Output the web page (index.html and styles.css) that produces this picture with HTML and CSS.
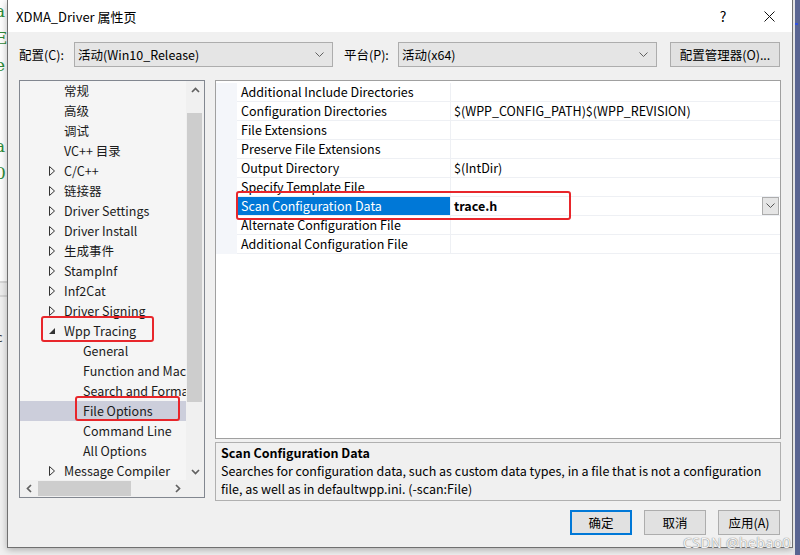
FILE: index.html
```html
<!DOCTYPE html>
<html>
<head>
<meta charset="utf-8">
<title>XDMA_Driver 属性页</title>
<link rel="stylesheet" href="styles.css">
</head>
<body>
<div class="screen">
  <div class="editor-strip">
    <div class="code-area">
      <div class="code-line">a</div>
      <div class="code-line">E</div>
      <div class="code-line">e</div>
      <div class="code-line"></div>
      <div class="code-line"></div>
      <div class="code-line">a</div>
      <div class="code-line">0</div>
    </div>
    <div class="strip-band"></div>
    <div class="strip-rest"><span class="strip-char">c</span></div>
  </div>

  <div class="dialog">
    <div class="titlebar">
      <span class="title">XDMA_Driver 属性页</span>
      <span class="tb-btn tb-help">?</span>
      <span class="tb-btn tb-close">
        <svg width="11" height="11" viewBox="0 0 11 11"><path d="M0.5 0.5 L10.5 10.5 M10.5 0.5 L0.5 10.5" stroke="#111" stroke-width="1" fill="none"/></svg>
      </span>
    </div>

    <div class="dlg-body">
      <div class="config-row">
        <span class="lbl lbl-config">配置(C):</span>
        <div class="combo">
          <span class="combo-text">活动(Win10_Release)</span>
          <svg class="chev" width="9" height="5" viewBox="0 0 9 5"><path d="M0.5 0.5 L4.5 4.5 L8.5 0.5" fill="none" stroke="#606060"/></svg>
        </div>
        <span class="lbl lbl-platform">平台(P):</span>
        <div class="combo">
          <span class="combo-text">活动(x64)</span>
          <svg class="chev" width="9" height="5" viewBox="0 0 9 5"><path d="M0.5 0.5 L4.5 4.5 L8.5 0.5" fill="none" stroke="#606060"/></svg>
        </div>
        <button class="btn btn-mgr">配置管理器(O)...</button>
      </div>

      <div class="main">
        <div class="tree">
          <div class="tree-list">
            <div class="tree-row"><span class="exp"></span>常规</div>
            <div class="tree-row"><span class="exp"></span>高级</div>
            <div class="tree-row"><span class="exp"></span>调试</div>
            <div class="tree-row"><span class="exp"></span>VC++ 目录</div>
            <div class="tree-row"><span class="exp"><svg width="7" height="10" viewBox="0 0 7 10"><path d="M0.5 0.5 L5.5 5 L0.5 9.5 Z" fill="none" stroke="#333"/></svg></span>C/C++</div>
            <div class="tree-row"><span class="exp"><svg width="7" height="10" viewBox="0 0 7 10"><path d="M0.5 0.5 L5.5 5 L0.5 9.5 Z" fill="none" stroke="#333"/></svg></span>链接器</div>
            <div class="tree-row"><span class="exp"><svg width="7" height="10" viewBox="0 0 7 10"><path d="M0.5 0.5 L5.5 5 L0.5 9.5 Z" fill="none" stroke="#333"/></svg></span>Driver Settings</div>
            <div class="tree-row"><span class="exp"><svg width="7" height="10" viewBox="0 0 7 10"><path d="M0.5 0.5 L5.5 5 L0.5 9.5 Z" fill="none" stroke="#333"/></svg></span>Driver Install</div>
            <div class="tree-row"><span class="exp"><svg width="7" height="10" viewBox="0 0 7 10"><path d="M0.5 0.5 L5.5 5 L0.5 9.5 Z" fill="none" stroke="#333"/></svg></span>生成事件</div>
            <div class="tree-row"><span class="exp"><svg width="7" height="10" viewBox="0 0 7 10"><path d="M0.5 0.5 L5.5 5 L0.5 9.5 Z" fill="none" stroke="#333"/></svg></span>StampInf</div>
            <div class="tree-row"><span class="exp"><svg width="7" height="10" viewBox="0 0 7 10"><path d="M0.5 0.5 L5.5 5 L0.5 9.5 Z" fill="none" stroke="#333"/></svg></span>Inf2Cat</div>
            <div class="tree-row"><span class="exp"><svg width="7" height="10" viewBox="0 0 7 10"><path d="M0.5 0.5 L5.5 5 L0.5 9.5 Z" fill="none" stroke="#333"/></svg></span>Driver Signing</div>
            <div class="tree-row"><span class="exp"><svg width="7" height="10" viewBox="0 0 7 10"><path d="M6 2 L6 8 L0 8 Z" fill="#333"/></svg></span>Wpp Tracing</div>
            <div class="tree-row level2"><span class="exp"></span>General</div>
            <div class="tree-row level2"><span class="exp"></span>Function and Macro Options</div>
            <div class="tree-row level2"><span class="exp"></span>Search and Formatting</div>
            <div class="tree-row level2 selected"><span class="exp"></span>File Options</div>
            <div class="tree-row level2"><span class="exp"></span>Command Line</div>
            <div class="tree-row level2"><span class="exp"></span>All Options</div>
            <div class="tree-row"><span class="exp"><svg width="7" height="10" viewBox="0 0 7 10"><path d="M0.5 0.5 L5.5 5 L0.5 9.5 Z" fill="none" stroke="#333"/></svg></span>Message Compiler</div>
          </div>
          <div class="vscroll">
            <span class="sb-arrow sb-up"><svg width="9" height="6" viewBox="0 0 9 6"><path d="M1 5 L4.5 1.5 L8 5" fill="none" stroke="#606060" stroke-width="1.7"/></svg></span>
            <span class="vthumb"></span>
            <span class="sb-arrow sb-down"><svg width="9" height="6" viewBox="0 0 9 6"><path d="M1 1 L4.5 4.5 L8 1" fill="none" stroke="#606060" stroke-width="1.7"/></svg></span>
          </div>
          <div class="hscroll">
            <span class="sb-arrow sb-left"><svg width="6" height="9" viewBox="0 0 6 9"><path d="M5 1 L1.5 4.5 L5 8" fill="none" stroke="#606060" stroke-width="1.7"/></svg></span>
            <span class="hthumb"></span>
            <span class="sb-arrow sb-right"><svg width="6" height="9" viewBox="0 0 6 9"><path d="M1 1 L4.5 4.5 L1 8" fill="none" stroke="#606060" stroke-width="1.7"/></svg></span>
          </div>
          <div class="corner"></div>
        </div>

        <div class="right-col">
          <div class="grid">
            <div class="prop-row"><span class="gutter"></span><span class="pname">Additional Include Directories</span><span class="pval"></span></div>
            <div class="prop-row"><span class="gutter"></span><span class="pname">Configuration Directories</span><span class="pval">$(WPP_CONFIG_PATH)$(WPP_REVISION)</span></div>
            <div class="prop-row"><span class="gutter"></span><span class="pname">File Extensions</span><span class="pval"></span></div>
            <div class="prop-row"><span class="gutter"></span><span class="pname">Preserve File Extensions</span><span class="pval"></span></div>
            <div class="prop-row"><span class="gutter"></span><span class="pname">Output Directory</span><span class="pval">$(IntDir)</span></div>
            <div class="prop-row"><span class="gutter"></span><span class="pname">Specify Template File</span><span class="pval"></span></div>
            <div class="prop-row sel"><span class="gutter"></span><span class="pname">Scan Configuration Data</span><span class="pval"><b>trace.h</b><span class="dd-btn"><svg width="9" height="5" viewBox="0 0 9 5"><path d="M0.5 0.5 L4.5 4.5 L8.5 0.5" fill="none" stroke="#555"/></svg></span></span></div>
            <div class="prop-row"><span class="gutter"></span><span class="pname">Alternate Configuration File</span><span class="pval"></span></div>
            <div class="prop-row"><span class="gutter"></span><span class="pname">Additional Configuration File</span><span class="pval"></span></div>
          </div>
          <div class="desc">
            <div class="desc-title">Scan Configuration Data</div>
            <div class="desc-text">Searches for configuration data, such as custom data types, in a file that is not a configuration file, as well as in defaultwpp.ini. (-scan:File)</div>
          </div>
        </div>
      </div>

      <div class="buttons">
        <button class="btn btn-act btn-default">确定</button>
        <button class="btn btn-act">取消</button>
        <button class="btn btn-act">应用(A)</button>
      </div>
    </div>
  </div>

  <div class="right-strip"><span class="rs-mark"></span></div>

  <div class="mark mark-wpp"></div>
  <div class="mark mark-file"></div>
  <div class="mark mark-scan"></div>
  <div class="watermark">CSDN @hebao0</div>
</div>
</body>
</html>
```

FILE: styles.css
```css
* { box-sizing: border-box; }
html, body { margin: 0; padding: 0; }
body {
  width: 800px;
  height: 555px;
  overflow: hidden;
  background: #f0f0f0;
  font-family: "Noto Sans CJK SC", "Noto Sans", sans-serif;
  font-size: 12.5px;
  color: #000;
}
.screen {
  position: relative;
  display: flex;
  width: 800px;
  height: 555px;
}

/* background editor strip */
.editor-strip {
  width: 7px;
  flex: none;
  display: flex;
  flex-direction: column;
  overflow: hidden;
  background: #f0f0f0;
}
.code-area {
  height: 281px;
  background: #fdfdfd;
}
.code-line {
  height: 27px;
  margin-left: -5px;
  font-family: "DejaVu Serif", serif;
  font-size: 17px;
  line-height: 22px;
  color: #2f8a3a;
}
.strip-band {
  height: 16px;
  border-top: 2px solid #d6d6d6;
  border-bottom: 2px solid #d6d6d6;
  background: #ededed;
}
.strip-rest {
  flex: 1;
  padding-top: 30px;
  margin-left: -4px;
  color: #444;
  font-size: 13px;
}

/* dialog */
.dialog {
  width: 786px;
  height: 548px;
  flex: none;
  display: flex;
  flex-direction: column;
  background: #f0f0f0;
  border: 1px solid #707070;
  border-top: none;
  box-shadow: 0 2px 7px rgba(0, 0, 0, 0.28);
}
.titlebar {
  height: 32px;
  flex: none;
  display: flex;
  align-items: center;
  background: #ffffff;
  padding-left: 8px;
}
.title {
  font-size: 13px;
  color: #000;
}
.tb-btn {
  width: 46px;
  height: 32px;
  display: flex;
  align-items: center;
  justify-content: center;
}
.tb-help {
  margin-left: auto;
  font-size: 14px;
}
.dlg-body {
  flex: 1;
  display: flex;
  flex-direction: column;
  padding: 10px 11px 0 11px;
}

/* config row */
.config-row {
  height: 25px;
  display: flex;
  align-items: center;
}
.lbl { white-space: nowrap; }
.lbl-config { width: 55px; }
.lbl-platform { width: 54px; margin-left: 11px; }
.combo {
  width: 259px;
  height: 25px;
  display: flex;
  align-items: center;
  background: #e5e5e5;
  border: 1px solid #adadad;
  padding: 0 8px 0 3px;
}
.combo-text { flex: 1; white-space: nowrap; }
.btn {
  font-family: inherit;
  font-size: 12.5px;
  color: #000;
  background: #e1e1e1;
  border: 1px solid #adadad;
  border-radius: 0;
  padding: 0;
}
.btn-mgr {
  width: 110px;
  height: 25px;
  margin-left: 13px;
}

/* main */
.main {
  margin-top: 13px;
  height: 421px;
  display: flex;
  gap: 10px;
}

/* tree */
.tree {
  width: 186px;
  height: 418px;
  flex: none;
  border: 1px solid #828790;
  background: #f5f5f5;
  display: grid;
  grid-template-columns: 166px 18px;
  grid-template-rows: 399px 17px;
}
.tree-list {
  overflow: hidden;
}
.tree-row {
  height: 20px;
  display: flex;
  align-items: center;
  padding-left: 29px;
  padding-bottom: 2px;
  white-space: nowrap;
  color: #1b1b1b;
}
.tree-row.level2 { padding-left: 48px; }
.tree-row.selected { background: #cccedb; }
.exp {
  width: 15px;
  flex: none;
  display: flex;
  align-items: center;
  padding-top: 2px;
}
.vscroll {
  background: #f0f0f0;
  display: flex;
  flex-direction: column;
}
.sb-arrow {
  display: flex;
  align-items: center;
  justify-content: center;
  flex: none;
}
.sb-up, .sb-down { height: 17px; }
.vthumb {
  width: 15px;
  height: 289px;
  margin: 15px 0 0 1px;
  background: #cdcdcd;
}
.sb-down { margin-top: auto; }
.hscroll {
  background: #f0f0f0;
  display: flex;
  align-items: center;
}
.sb-left, .sb-right { width: 17px; height: 17px; }
.hthumb {
  width: 93px;
  height: 15px;
  margin-left: 1px;
  background: #cdcdcd;
}
.sb-right { margin-left: auto; }
.corner { background: #f0f0f0; }

/* right column */
.right-col {
  width: 566px;
  flex: none;
  display: flex;
  flex-direction: column;
  gap: 3px;
}
.grid {
  height: 359px;
  border: 1px solid #a0a0a0;
  background: #ffffff;
  padding-top: 2px;
}
.prop-row {
  height: 19px;
  display: grid;
  grid-template-columns: 21px 214px 1fr;
}
.gutter { background: #f4f6fa; }
.pname, .pval {
  display: flex;
  align-items: center;
  border-bottom: 1px solid #eef0f4;
  padding-bottom: 1px;
  white-space: nowrap;
  overflow: hidden;
}
.pname {
  padding-left: 4px;
  border-right: 1px solid #eef0f4;
}
.pval { padding-left: 3px; }
.prop-row.sel .pname {
  background: #0078d7;
  color: #ffffff;
}
.pval b { font-weight: 700; }
.dd-btn {
  margin-left: auto;
  margin-right: 1px;
  width: 17px;
  height: 18px;
  display: flex;
  align-items: center;
  justify-content: center;
  background: #e5e5e5;
  border: 1px solid #adadad;
}
.desc {
  height: 59px;
  border: 1px solid #b0b0b0;
  background: #f0f0f0;
  padding: 1px 8px 0 5px;
  line-height: 18px;
}
.desc-title { font-weight: 700; }

/* buttons */
.buttons {
  margin-top: 9px;
  display: flex;
  justify-content: flex-end;
  gap: 12px;
  padding-right: 1px;
}
.btn-act {
  width: 62px;
  height: 25px;
}
.btn-default {
  border: 2px solid #0078d7;
}

/* right strip */
.right-strip {
  width: 7px;
  flex: none;
  background: #5a6591;
  border-left: 2px solid #e4e4e4;
  position: relative;
}
.rs-mark {
  display: block;
  margin-top: 23px;
  height: 2px;
  width: 3px;
  background: #3050e0;
}

/* annotations */
.mark {
  position: absolute;
  border: 2px solid #e8262b;
  border-radius: 3px;
}
.mark-wpp { left: 41px; top: 316px; width: 113px; height: 26px; }
.mark-file { left: 75px; top: 396px; width: 105px; height: 25px; }
.mark-scan { left: 236px; top: 191px; width: 335px; height: 29px; }
.watermark {
  position: absolute;
  left: 683px;
  top: 535px;
  font-family: "Noto Sans", sans-serif;
  font-size: 14px;
  line-height: 16px;
  color: #f4f4f4;
  text-shadow: 0 0 1px #8a8a8a, 0 0 1px #8a8a8a;
  letter-spacing: 0.4px;
}
```
